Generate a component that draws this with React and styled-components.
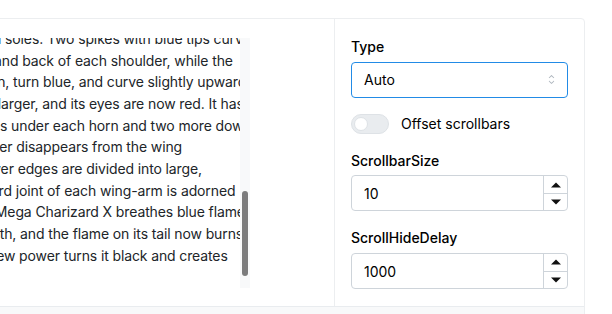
import { useLayoutEffect, useRef } from "react";
import styled, { createGlobalStyle } from "styled-components";

const lines = [
  "As Mega Charizard X, its body and legs are more physically fit,",
  "though its arms remain thin. Its skin turns black with a",
  "sky-blue underside and soles. Two spikes with blue tips curve",
  "upward from the front and back of each shoulder, while the",
  "tips of its horns sharpen, turn blue, and curve slightly upward.",
  "Its brow and claws are larger, and its eyes are now red. It has",
  "two small, fin-like spikes under each horn and two more down",
  "its lower neck. The finger disappears from the wing",
  "membrane, and the lower edges are divided into large,",
  "rounded points. The third joint of each wing-arm is adorned",
  "with a claw-like spike. Mega Charizard X breathes blue flames",
  "out the sides of its mouth, and the flame on its tail now burns",
  "blue. It is said that its new power turns it black and creates",
  "more intense flames.",
];

const ChevronSelector = () => (
  <svg width="15" height="15" viewBox="0 0 15 15" fill="none">
    <path
      d="M4.93179 5.43179C4.75605 5.60753 4.75605 5.89245 4.93179 6.06819C5.10753 6.24392 5.39245 6.24392 5.56819 6.06819L7.49999 4.13638L9.43179 6.06819C9.60753 6.24392 9.89245 6.24392 10.0682 6.06819C10.2439 5.89245 10.2439 5.60753 10.0682 5.43179L7.81819 3.18179C7.73379 3.0974 7.61933 3.04999 7.49999 3.04999C7.38064 3.04999 7.26618 3.0974 7.18179 3.18179L4.93179 5.43179ZM10.0682 9.56819C10.2439 9.39245 10.2439 9.10753 10.0682 8.93179C9.89245 8.75606 9.60753 8.75606 9.43179 8.93179L7.49999 10.8636L5.56819 8.93179C5.39245 8.75606 5.10753 8.75606 4.93179 8.93179C4.75605 9.10753 4.75605 9.39245 4.93179 9.56819L7.18179 11.8182C7.26618 11.9026 7.38064 11.95 7.49999 11.95C7.61933 11.95 7.73379 11.9026 7.81819 11.8182L10.0682 9.56819Z"
      fill="#adb5bd"
    />
  </svg>
);

const Triangle = ({ down }) => (
  <svg width="10" height="6" viewBox="0 0 10 6">
    <path d={down ? "M0 0.5H10L5 5.5Z" : "M0 5.5H10L5 0.5Z"} fill="#111" />
  </svg>
);

const NumberField = ({ label, value }) => (
  <Field>
    <Label>{label}</Label>
    <NumberBox>
      <NumberValue>{value}</NumberValue>
      <Controls>
        <Control>
          <Triangle />
        </Control>
        <Control>
          <Triangle down />
        </Control>
      </Controls>
    </NumberBox>
  </Field>
);

const App = () => {
  const viewportRef = useRef(null);

  // the demo text is scrolled part way down
  useLayoutEffect(() => {
    if (viewportRef.current) viewportRef.current.scrollTop = 53;
  }, []);

  return (
    <>
      <GlobalStyle />
      <Page>
        <Card>
          <Demo>
            <Preview>
              <ScrollArea>
                <Viewport ref={viewportRef}>
                  {lines.map((line) => (
                    <Line key={line}>{line}</Line>
                  ))}
                </Viewport>
                <Scrollbar>
                  <Thumb />
                </Scrollbar>
              </ScrollArea>
            </Preview>
            <ControlsPanel>
              <Field>
                <Label>Type</Label>
                <SelectBox>
                  <span>Auto</span>
                  <ChevronSelector />
                </SelectBox>
              </Field>
              <SwitchRow>
                <SwitchTrack>
                  <SwitchThumb />
                </SwitchTrack>
                <SwitchLabel>Offset scrollbars</SwitchLabel>
              </SwitchRow>
              <NumberField label="ScrollbarSize" value="10" />
              <NumberField label="ScrollHideDelay" value="1000" />
            </ControlsPanel>
          </Demo>
          <CodeBar />
        </Card>
      </Page>
    </>
  );
};

const GlobalStyle = createGlobalStyle`
  html, body {
    margin: 0;
    padding: 0;
    background: #fff;
    overflow: hidden;
  }
  body {
    font-family: Inter, "Noto Sans", sans-serif;
    color: #212529;
  }
  * {
    box-sizing: border-box;
  }
`;

const Page = styled.div`
  width: 612px;
  padding-top: 18px;
`;

const Card = styled.div`
  margin-left: -237px;
  width: 822px;
  border: 1px solid #eceef0;
  border-radius: 4px;
  overflow: hidden;
`;

const Demo = styled.div`
  display: grid;
  grid-template-columns: 1fr 250px;
  border-bottom: 1px solid #e9ecef;
`;

const Preview = styled.div`
  display: flex;
  align-items: center;
  justify-content: center;
`;

const ScrollArea = styled.div`
  position: relative;
  width: 402px;
  height: 250px;
`;

const Viewport = styled.div`
  height: 100%;
  overflow: hidden;
  font-size: 14px;
  line-height: 1.55;
  letter-spacing: -0.12px;
`;

const Line = styled.span`
  display: block;
  white-space: nowrap;
`;

const Scrollbar = styled.div`
  position: absolute;
  top: 0;
  right: 0;
  bottom: 0;
  width: 10px;
  background: #f8f9fa;
`;

const Thumb = styled.div`
  position: absolute;
  left: 2px;
  right: 2px;
  top: 153px;
  height: 85px;
  border-radius: 10px;
  background: rgba(0, 0, 0, 0.5);
`;

const ControlsPanel = styled.div`
  display: flex;
  flex-direction: column;
  gap: 16px;
  padding: 17px 16px 17px;
  border-left: 1px solid #eceef0;
`;

const Field = styled.div`
  display: flex;
  flex-direction: column;
  gap: 4px;
`;

const Label = styled.label`
  font-size: 14px;
  font-weight: 500;
  line-height: 1.55;
  color: #000;
`;

const SelectBox = styled.div`
  height: 36px;
  display: flex;
  align-items: center;
  justify-content: space-between;
  padding: 0 8px 0 12px;
  border: 1px solid #228be6;
  border-radius: 4px;
  font-size: 14px;
  color: #000;
`;

const SwitchRow = styled.div`
  display: flex;
  align-items: center;
  gap: 12px;
  height: 20px;
`;

const SwitchTrack = styled.div`
  width: 38px;
  height: 20px;
  border-radius: 20px;
  background: #e9ecef;
  border: 1px solid #dee2e6;
  display: flex;
  align-items: center;
  padding-left: 2px;
`;

const SwitchThumb = styled.div`
  width: 14px;
  height: 14px;
  border-radius: 50%;
  background: #fff;
  border: 1px solid #dee2e6;
`;

const SwitchLabel = styled.span`
  font-size: 14px;
  color: #000;
`;

const NumberBox = styled.div`
  height: 36px;
  display: flex;
  border: 1px solid #ced4da;
  border-radius: 4px;
  overflow: hidden;
`;

const NumberValue = styled.div`
  flex: 1;
  display: flex;
  align-items: center;
  padding-left: 12px;
  font-size: 14px;
  color: #000;
`;

const Controls = styled.div`
  width: 24px;
  display: flex;
  flex-direction: column;
  border-left: 1px solid #ced4da;
`;

const Control = styled.div`
  flex: 1;
  display: flex;
  align-items: center;
  justify-content: center;

  & + & {
    border-top: 1px solid #ced4da;
  }
`;

const CodeBar = styled.div`
  height: 40px;
  background: #f8f9fa;
`;

export default App;
